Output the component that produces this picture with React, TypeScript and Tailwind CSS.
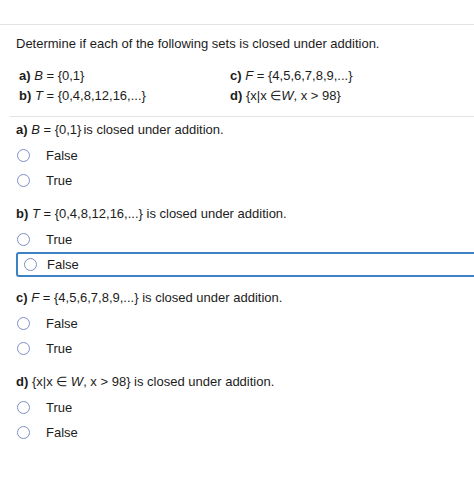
import React from 'react';

type Question = {
  label: string;
  set: React.ReactNode;
  options: string[];
  selected?: string;
  tight?: boolean;
};

function Radio() {
  return <span className="inline-block w-[13px] h-[13px] rounded-full border-[1.5px] border-[#7f8ec6] bg-white" />;
}

const questions: Question[] = [
  {
    label: 'a)',
    set: (
      <>
        <i>B</i> = {'{'}0,1{'}'}
      </>
    ),
    options: ['False', 'True'],
    tight: true,
  },
  {
    label: 'b)',
    set: (
      <>
        <i>T</i> = {'{'}0,4,8,12,16,...{'}'}
      </>
    ),
    options: ['True', 'False'],
    selected: 'False',
  },
  {
    label: 'c)',
    set: (
      <>
        <i>F</i> = {'{'}4,5,6,7,8,9,...{'}'}
      </>
    ),
    options: ['False', 'True'],
  },
  {
    label: 'd)',
    set: (
      <>
        {'{'}x|x ∈ <i>W</i>, x &gt; 98{'}'}
      </>
    ),
    options: ['True', 'False'],
  },
];

export default function App() {
  return (
    <div
      className="w-[474px] h-[483px] bg-white text-[13px] text-[#1c1c1c] overflow-hidden pt-6"
      style={{ fontFamily: '"Liberation Sans", Arial, sans-serif' }}
    >
      <div className="border-t border-[#e2e2e2]">
        <p className="pl-4 pt-[9px] leading-5">Determine if each of the following sets is closed under addition.</p>
        <div className="grid grid-cols-[211px_1fr] pl-[19px] mt-3 leading-5">
          <div>
            <b>a)</b> <i>B</i> = {'{'}0,1{'}'}
          </div>
          <div>
            <b>c)</b> <i>F</i> = {'{'}4,5,6,7,8,9,...{'}'}
          </div>
          <div>
            <b>b)</b> <i>T</i> = {'{'}0,4,8,12,16,...{'}'}
          </div>
          <div>
            <b>d)</b> {'{'}x|x ∈<i>W</i>, x &gt; 98{'}'}
          </div>
        </div>
      </div>

      <div className="ml-[10px] mt-[10px] border-t border-[#e2e2e2]">
        {questions.map((q) => (
          <div key={q.label} className="mb-2">
            <div className="h-[26px] flex items-center pl-[6px]">
              <span>
                <b>{q.label}</b> {q.set}
                {q.tight ? <span className="ml-[2px]">is</span> : ' is'} closed under addition.
              </span>
            </div>
            {q.options.map((opt) =>
              q.selected === opt ? (
                <div
                  key={opt}
                  className="h-[25px] flex items-center ml-[6px] -mr-4 border-2 border-[#3d82c2] rounded-[3px]"
                >
                  <span className="w-[27px] flex justify-center ml-[-1px]">
                    <Radio />
                  </span>
                  <span className="ml-[3px]">{opt}</span>
                </div>
              ) : (
                <div key={opt} className="h-[25px] flex items-center pl-[7px]">
                  <span className="w-[29px] flex">
                    <Radio />
                  </span>
                  <span>{opt}</span>
                </div>
              )
            )}
          </div>
        ))}
      </div>
    </div>
  );
}
